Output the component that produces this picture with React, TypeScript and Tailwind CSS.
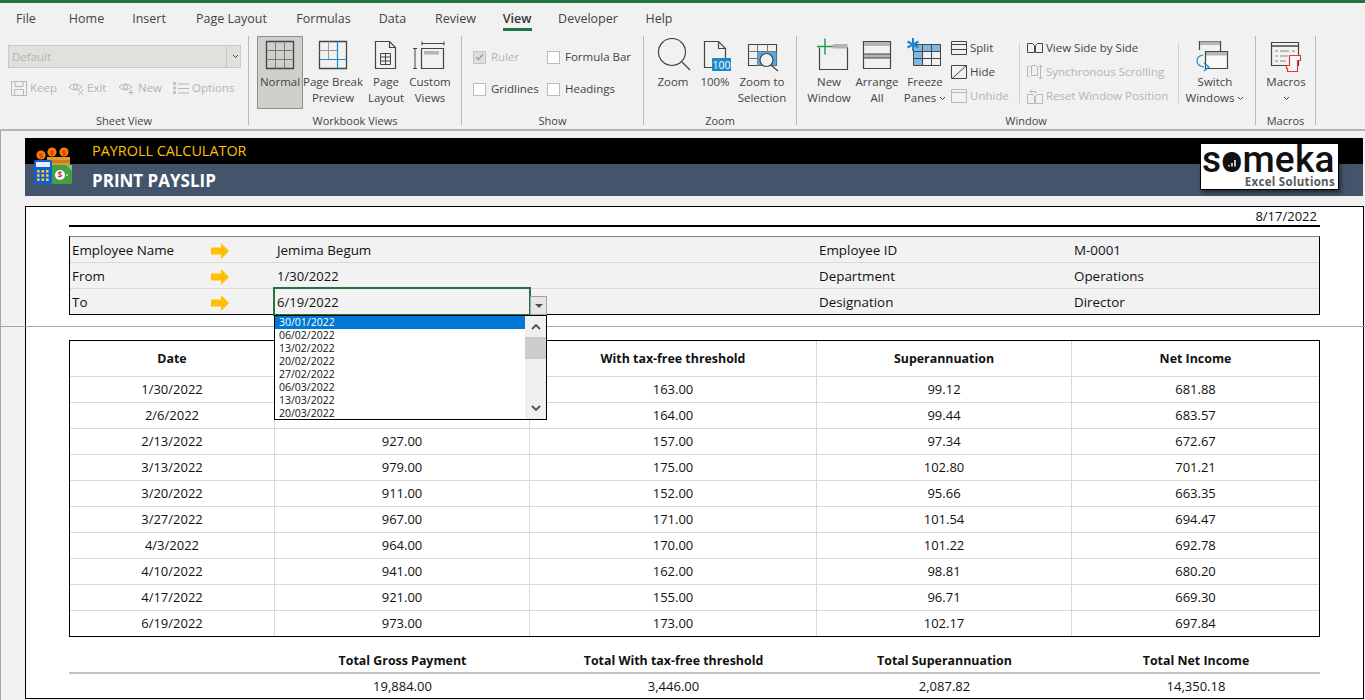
import type { ReactNode } from "react";

const ink = "#444444";
const off = "#b7b7b7";
const blue = "#1e88c9";

const tabs = [
    { label: "File", cls: "w-[52px]" },
    { label: "Home", cls: "w-[69px]" },
    { label: "Insert", cls: "w-[56px]" },
    { label: "Page Layout", cls: "w-[109px]" },
    { label: "Formulas", cls: "w-[75px]" },
    { label: "Data", cls: "w-[63px]" },
    { label: "Review", cls: "w-[63px]" },
    { label: "View", cls: "w-[60px]" },
    { label: "Developer", cls: "w-[82px]" },
    { label: "Help", cls: "w-[60px]" },
];

const payRows = [
    ["1/30/2022", "944.00", "163.00", "99.12", "681.88"],
    ["2/6/2022", "947.00", "164.00", "99.44", "683.57"],
    ["2/13/2022", "927.00", "157.00", "97.34", "672.67"],
    ["3/13/2022", "979.00", "175.00", "102.80", "701.21"],
    ["3/20/2022", "911.00", "152.00", "95.66", "663.35"],
    ["3/27/2022", "967.00", "171.00", "101.54", "694.47"],
    ["4/3/2022", "964.00", "170.00", "101.22", "692.78"],
    ["4/10/2022", "941.00", "162.00", "98.81", "680.20"],
    ["4/17/2022", "921.00", "155.00", "96.71", "669.30"],
    ["6/19/2022", "973.00", "173.00", "102.17", "697.84"],
];

const infoRows = [
    ["Employee Name", "Jemima Begum", "Employee ID", "M-0001"],
    ["From", "1/30/2022", "Department", "Operations"],
    ["To", "6/19/2022", "Designation", "Director"],
];

const listDates = [
    "30/01/2022",
    "06/02/2022",
    "13/02/2022",
    "20/02/2022",
    "27/02/2022",
    "06/03/2022",
    "13/03/2022",
    "20/03/2022",
];

// every big ribbon icon shares a 40x34 box
function BigIcon({ children }: { children: ReactNode }) {
    return (
        <svg width="40" height="34" viewBox="0 0 40 34" fill="none" stroke={ink} strokeWidth="1">
            {children}
        </svg>
    );
}

function BigButton({
    icon,
    lines,
    className,
    caret,
}: {
    icon: ReactNode;
    lines: string[];
    className: string;
    caret?: boolean;
}) {
    return (
        <div className={`flex flex-col items-center h-[73px] pt-[2px] shrink-0 ${className}`}>
            <div className="h-[36px]">{icon}</div>
            {lines.map((l, i) => (
                <div key={i} className={`h-[16px] leading-[16px] whitespace-nowrap ${l === "" ? "-ml-[3px]" : ""}`}>
                    {l}
                    {caret && i === lines.length - 1 && <Caret />}
                </div>
            ))}
        </div>
    );
}

function Caret() {
    return (
        <svg width="7" height="5" viewBox="0 0 7 5" className="inline ml-[3px] mb-[1px]" fill="none" stroke={ink}>
            <path d="M1 1l2.5 2.5L6 1" />
        </svg>
    );
}

function Group({
    label,
    className,
    children,
}: {
    label: string;
    className: string;
    children: ReactNode;
}) {
    return (
        <div className={`relative h-[89px] shrink-0 border-r border-[#b9b9b9] ${className}`}>
            <div className="flex h-[73px]">{children}</div>
            <div className="absolute left-0 right-0 bottom-[-3px] text-center text-[11px] leading-[14px] text-[#444]">
                {label}
            </div>
        </div>
    );
}

function SmallRow({
    icon,
    label,
    disabled,
}: {
    icon: ReactNode;
    label: string;
    disabled?: boolean;
}) {
    return (
        <div className={`flex items-center h-[24px] whitespace-nowrap ${disabled ? "text-[#b4b4b4]" : ""}`}>
            <span className="w-[19px] flex items-center">{icon}</span>
            {label}
        </div>
    );
}

function Check({ label, checked, disabled }: { label: string; checked?: boolean; disabled?: boolean }) {
    return (
        <div className={`flex items-center gap-[5px] h-[32px] ${disabled ? "text-[#b4b4b4]" : ""}`}>
            <span
                className={`w-[13px] h-[13px] border flex items-center justify-center ${
                    checked ? "border-[#c4c4c4] bg-[#dedede]" : "border-[#bcbcbc] bg-white"
                }`}
            >
                {checked && (
                    <svg width="9" height="8" viewBox="0 0 9 8" fill="none" stroke="#9a9a9a" strokeWidth="1.2">
                        <path d="M1 4l2.5 2.5L8 1" />
                    </svg>
                )}
            </span>
            {label}
        </div>
    );
}

function Arrow() {
    return (
        <svg width="18" height="16" viewBox="0 0 18 16" fill="#ffc000">
            <path d="M0 4.500h10V0l8 8-8 8v-4.500H0z" />
        </svg>
    );
}

function Chevron({ up }: { up?: boolean }) {
    return (
        <svg width="10" height="7" viewBox="0 0 10 7" fill="none" stroke="#505050" strokeWidth="1.8">
            <path d={up ? "M1 6l4-4 4 4" : "M1 1l4 4 4-4"} />
        </svg>
    );
}

function Coin({ x, y }: { x: number; y: number }) {
    return (
        <g>
            <circle cx={x} cy={y} r="4.6" fill="#f57c00" />
            <text x={x} y={y + 2.6} fontSize="7.5" fontWeight="700" fill="#d32f2f" textAnchor="middle" fontFamily="Open Sans">
                $
            </text>
        </g>
    );
}

function AppLogo() {
    return (
        <svg width="42" height="42" viewBox="0 0 42 42" className="absolute left-[8px] top-[6px]">
            <rect x="14" y="13" width="23" height="3" fill="#e09a2b" />
            <rect x="14" y="16" width="23" height="3" fill="#c97f1c" />
            <rect x="14" y="19" width="23" height="3" fill="#e09a2b" />
            <Coin x={8} y={11} />
            <Coin x={19} y={8} />
            <Coin x={31} y={8} />
            <rect x="18" y="21" width="21" height="19" fill="#43a047" />
            <path d="M33 21h6v6z" fill="#7cc576" />
            <circle cx="27" cy="31" r="5" fill="#fff" />
            <text x="27" y="34" fontSize="8" fontWeight="700" fill="#d32f2f" textAnchor="middle" fontFamily="Open Sans">
                $
            </text>
            <rect x="33" y="30.500" width="2" height="1" fill="#fff" />
            <rect x="1" y="16" width="18" height="24" rx="2" fill="#0d5fd8" />
            <rect x="3" y="18" width="14" height="5" fill="#e8eef7" />
            {[0, 1, 2].map(c =>
                [0, 1, 2].map(r => (
                    <rect key={`${c}-${r}`} x={4 + c * 4.5} y={26 + r * 4.2} width="2.6" height="2.6" fill="#ffca28" />
                ))
            )}
        </svg>
    );
}

function Ribbon() {
    return (
        <div className="h-[131px] shrink-0 bg-[#f1f1f1] border-b-2 border-[#b4b4b4] text-[#444] font-['Open_Sans',sans-serif] text-[11.5px]">
            <div className="h-[3px] bg-[#217346]" />
            <div className="flex h-[33px] text-[12.5px]">
                {tabs.map(t => (
                    <div key={t.label} className={`relative flex items-center justify-center ${t.cls} ${t.label === "View" ? "font-semibold text-[#333]" : ""}`}>
                        {t.label}
                        {t.label === "View" && (
                            <div className="absolute left-[16px] right-[15px] bottom-[5px] h-[3px] bg-[#217346]" />
                        )}
                    </div>
                ))}
            </div>

            <div className="flex">
                <Group label="Sheet View" className="w-[249px]">
                    <div className="flex flex-col pl-[8px] pt-[9px] text-[#b4b4b4]">
                        <div className="flex items-center w-[233px] h-[23px] bg-[#e1e0dd] border border-[#c9c9c9]">
                            <span className="flex-1 pl-[3px]">Default</span>
                            <span className="w-[14px] h-full border-l border-[#c9c9c9] flex items-center justify-center">
                                <Caret />
                            </span>
                        </div>
                        <div className="flex items-center h-[20px] mt-[10px] pl-[3px]">
                            <svg width="16" height="15" viewBox="0 0 16 15" fill="none" stroke={off} className="mr-[3px]">
                                <path d="M.5.5h15v14H.5zM4 .5v5h8v-5M3.500 14.500v-6h9v6" />
                            </svg>
                            <span className="w-[38px]">Keep</span>
                            <svg width="16" height="15" viewBox="0 0 16 15" fill="none" stroke={off} className="mr-[3px]">
                                <path d="M1 6q6-6 13 0-7 6-13 0z" />
                                <circle cx="7.5" cy="6" r="2" />
                                <path d="M10 9l5 5M15 9l-5 5" />
                            </svg>
                            <span className="w-[31px]">Exit</span>
                            <svg width="17" height="15" viewBox="0 0 17 15" fill="none" stroke={off} className="mr-[3px]">
                                <path d="M1 6q6-6 13 0-7 6-13 0z" />
                                <circle cx="7.5" cy="6" r="2" />
                                <path d="M13 9v5M10.500 11.500h5" />
                            </svg>
                            <span className="w-[35px]">New</span>
                            <svg width="16" height="13" viewBox="0 0 16 13" fill="none" stroke={off} className="mr-[3px]">
                                <path d="M5 2h11M5 6.500h11M5 11h11M.5.5h2v2h-2zM.5 5h2v2h-2zM.5 9.500h2v2h-2z" />
                            </svg>
                            <span>Options</span>
                        </div>
                    </div>
                </Group>

                <Group label="Workbook Views" className="w-[213px]">
                    <div className="w-[8px]" />
                    <BigButton
                        className="w-[46px] bg-[#d1cfcb] border border-[#8f8f8f] !pt-[1px]"
                        lines={["Normal"]}
                        icon={
                            <BigIcon>
                                <path d="M6.500 3.500h27v27h-27z" strokeWidth="1.300" />
                                <path d="M15.500 3.500v27M24.500 3.500v27M6.500 12.500h27M6.500 21.500h27" stroke="#777" />
                            </BigIcon>
                        }
                    />
                    <BigButton
                        className="w-[60px]"
                        lines={["Page Break", "Preview"]}
                        icon={
                            <BigIcon>
                                <path d="M6.500 3.500h27v27h-27z" strokeWidth="1.300" />
                                <path d="M15.500 3.500v18M6.500 12.500h18" stroke="#999" />
                                <path d="M24.500 3.500v27M6.500 21.500h27" stroke={blue} strokeWidth="1.200" />
                            </BigIcon>
                        }
                    />
                    <BigButton
                        className="w-[46px]"
                        lines={["Page", "Layout"]}
                        icon={
                            <BigIcon>
                                <path d="M9.500 3.500h14l6 6v21h-20zM23.500 3.500v6h6" strokeWidth="1.200" />
                                <path d="M14.500 15.500h10v11h-10zM14.500 19h10M14.500 23h10M19.500 15.500v11" />
                            </BigIcon>
                        }
                    />
                    <BigButton
                        className="w-[42px]"
                        lines={["Custom", "Views"]}
                        icon={
                            <BigIcon>
                                <path d="M12 5.500h22M12 3.500v4M34 3.500v4M5 10.500v20M3 10.500h4M3 30.500h4" />
                                <path d="M11.500 10.500h22v20h-22z" strokeWidth="1.200" />
                                <rect x="14" y="13" width="15" height="3.500" fill="#b5b5b5" stroke="none" />
                            </BigIcon>
                        }
                    />
                </Group>

                <Group label="Show" className="w-[182px]">
                    <div className="flex pl-[11px] pt-[5px]">
                        <div className="w-[74px]">
                            <Check label="Ruler" checked disabled />
                            <Check label="Gridlines" />
                        </div>
                        <div>
                            <Check label="Formula Bar" />
                            <Check label="Headings" />
                        </div>
                    </div>
                </Group>

                <Group label="Zoom" className="w-[153px]">
                    <div className="w-[6px]" />
                    <BigButton
                        className="w-[46px]"
                        lines={["Zoom"]}
                        icon={
                            <BigIcon>
                                <circle cx="19" cy="14" r="13.500" strokeWidth="1.200" />
                                <path d="M29 24l8 8" strokeWidth="1.200" />
                            </BigIcon>
                        }
                    />
                    <BigButton
                        className="w-[38px]"
                        lines={["100%"]}
                        icon={
                            <BigIcon>
                                <path d="M9.500 3.500h14l7 7v19h-21zM23.500 3.500v7h7" strokeWidth="1.200" />
                                <rect x="17" y="20" width="19" height="13" fill={blue} stroke="none" />
                                <text x="26.500" y="31" fill="#fff" stroke="none" fontSize="10.5" textAnchor="middle" fontFamily="Open Sans">
                                    100
                                </text>
                            </BigIcon>
                        }
                    />
                    <BigButton
                        className="w-[56px]"
                        lines={["Zoom to", "Selection"]}
                        icon={
                            <BigIcon>
                                <path d="M6.500 6.500h28v21h-28z" strokeWidth="1.100" />
                                <path d="M6.500 13.500h28M6.500 20.500h9M15.500 6.500v21M25.500 6.500v7" stroke="#777" />
                                <rect x="15.500" y="14" width="19" height="13.500" fill="#5aa7dd" stroke="none" />
                                <circle cx="24.500" cy="22" r="6.500" fill="#f1f1f1" strokeWidth="1.200" />
                                <path d="M29 27l7 6" strokeWidth="1.200" />
                            </BigIcon>
                        }
                    />
                </Group>

                <Group label="Window" className="w-[459px]">
                    <div className="w-[8px]" />
                    <BigButton
                        className="w-[48px]"
                        lines={["New", "Window"]}
                        icon={
                            <BigIcon>
                                <path d="M10.500 9.500v22h28v-22h-14" strokeWidth="1.200" />
                                <rect x="24" y="6" width="14.500" height="4.500" fill="#b5b5b5" stroke="none" />
                                <path d="M16 .5v16M8 8.500h16" stroke="#22a14a" strokeWidth="1.500" />
                            </BigIcon>
                        }
                    />
                    <BigButton
                        className="w-[48px]"
                        lines={["Arrange", "All"]}
                        icon={
                            <BigIcon>
                                <path d="M6.500 3.500h27v27h-27z" strokeWidth="1.200" />
                                <rect x="7" y="4" width="26" height="4" fill="#b5b5b5" stroke="none" />
                                <rect x="7" y="16" width="26" height="4" fill="#b5b5b5" stroke="none" />
                                <path d="M6.500 16h27M6.500 20h27" />
                            </BigIcon>
                        }
                    />
                    <BigButton
                        className="w-[48px]"
                        lines={["Freeze", "Panes"]}
                        caret
                        icon={
                            <BigIcon>
                                <rect x="8" y="6" width="28" height="7" fill="#7fb8e6" stroke="none" />
                                <rect x="8" y="13" width="9" height="14" fill="#7fb8e6" stroke="none" />
                                <path d="M8.500 6.500h27v21h-27zM8.500 13.500h27M8.500 20.500h27M17.500 6.500v21M26.500 6.500v21" />
                                <path d="M8 0v13M2.500 3.500l11 6M13.500 3.500l-11 6" stroke={blue} strokeWidth="2" />
                            </BigIcon>
                        }
                    />
                    <div className="w-[2px]" />
                    <div className="w-[68px]">
                        <SmallRow
                            label="Split"
                            icon={
                                <svg width="16" height="14" viewBox="0 0 16 14" fill="none" stroke={ink}>
                                    <path d="M.5.5h15v13H.5zM.5 3.500h15M.5 8.500h15" />
                                </svg>
                            }
                        />
                        <SmallRow
                            label="Hide"
                            icon={
                                <svg width="16" height="14" viewBox="0 0 16 14" fill="none" stroke={ink}>
                                    <path d="M.5.5h15v13H.5zM1 13.500L15.500.5" />
                                </svg>
                            }
                        />
                        <SmallRow
                            label="Unhide"
                            disabled
                            icon={
                                <svg width="16" height="14" viewBox="0 0 16 14" fill="none" stroke={off}>
                                    <path d="M.5.5h15v13H.5zM.5 3.500h15" />
                                </svg>
                            }
                        />
                    </div>
                    <div className="w-px h-[60px] mt-[7px] bg-[#cfcfcf]" />
                    <div className="w-[158px] pl-[7px]">
                        <SmallRow
                            label="View Side by Side"
                            icon={
                                <svg width="16" height="10" viewBox="0 0 16 10" fill="none" stroke={ink}>
                                    <path d="M.5.5h5l2 2v7h-7zM8.500 2.500l2-2h5v9h-7z" />
                                </svg>
                            }
                        />
                        <SmallRow
                            label="Synchronous Scrolling"
                            disabled
                            icon={
                                <svg width="17" height="16" viewBox="0 0 17 16" fill="none" stroke={off}>
                                    <path d="M2.500 2.500H.5v10h2M4.500 1.500h4l2 2v8h-6zM13.500 1v14M11.500 3l2-2 2 2M11.500 13l2 2 2-2" />
                                </svg>
                            }
                        />
                        <SmallRow
                            label="Reset Window Position"
                            disabled
                            icon={
                                <svg width="16" height="16" viewBox="0 0 16 16" fill="none" stroke={off}>
                                    <path d="M.5 6.500h5l2 2v7h-7zM8.500 8.500l2-2h5v9h-7zM3 3.500h6v2M5 1.500l-2 2 2 2" />
                                </svg>
                            }
                        />
                    </div>
                    <div className="w-px h-[60px] mt-[7px] bg-[#cfcfcf]" />
                    <BigButton
                        className="w-[72px]"
                        lines={["Switch", "Windows"]}
                        caret
                        icon={
                            <BigIcon>
                                <path d="M4.500 12V3.500h21V13" strokeWidth="1.200" />
                                <rect x="5" y="3.500" width="20" height="3.500" fill="#b5b5b5" stroke="none" />
                                <path d="M10.500 13.500h22v17h-22z" fill="#f8f8f8" strokeWidth="1.200" />
                                <rect x="11" y="14" width="21" height="3.500" fill="#b5b5b5" stroke="none" />
                                <path d="M8 17q-6 1-6 6t7 6M9 25l5 4-5 4" stroke={blue} strokeWidth="1.200" />
                            </BigIcon>
                        }
                    />
                </Group>

                <Group label="Macros" className="w-[60px]">
                    <BigButton
                        className="w-[60px]"
                        lines={["Macros", ""]}
                        caret
                        icon={
                            <BigIcon>
                                <path d="M5.500 4.500h27v23h-27z" strokeWidth="1.200" />
                                <path d="M5.500 8h27" strokeWidth="1.500" />
                                <path d="M9 13h3M14 13h9M26 13h3M9 18h3M14 18h8M9 23h3M14 23h6" stroke="#888" />
                                <path d="M23.500 17.500h11v5h-3v11h-10v-3h-1v-3h3v-10z" fill="#f8f8f8" stroke="#e83a3a" strokeWidth="1.200" />
                            </BigIcon>
                        }
                    />
                </Group>
            </div>
        </div>
    );
}

function Banner() {
    return (
        <div className="relative ml-[24px] w-[1338px] h-[58px] shrink-0 font-['Open_Sans',sans-serif]">
            <div className="h-[26px] bg-black pl-[67px] flex items-center text-[14.4px] text-[#ffc000]">
                PAYROLL CALCULATOR
            </div>
            <div className="h-[32px] bg-[#44546a] pl-[67px] pt-[2px] flex items-center text-[17px] font-bold text-white">
                PRINT PAYSLIP
            </div>
            <AppLogo />
            <div className="absolute left-[1175px] top-[5px] w-[139px] h-[47px] bg-white border border-black shadow-[2px_3px_4px_rgba(0,0,0,0.45)]">
                <div className="relative pl-[1px] text-[37px] leading-[31px] font-medium tracking-[0.2px] font-['Roboto',sans-serif] text-[#111]">
                    someka
                    <svg width="16" height="16" viewBox="0 0 16 16" className="absolute left-[23px] top-[11px]">
                        <circle cx="8" cy="8" r="8" fill="#111" />
                        <path d="M5 10v1.500M8 8v3.500M11 5v6.500" stroke="#fff" strokeWidth="1.500" />
                    </svg>
                </div>
                <div className="text-right pr-[3px] text-[11.5px] leading-[14px] font-bold tracking-[0.3px] text-[#595959] font-['Open_Sans',sans-serif]">
                    Excel Solutions
                </div>
            </div>
        </div>
    );
}

function Sheet() {
    return (
        <div className="flex-1 bg-[#f1f1f1] border-l border-[#a6a6a6] pt-[7px] font-['Open_Sans',sans-serif] text-[13px] text-[#111]">
            <Banner />
            <div className="ml-[24px] mt-[10px] w-[1339px] h-[493px] bg-white border border-black pl-[43px]">
                <div className="w-[1251px] h-[20px] border-b-2 border-black text-right pr-[3px] leading-[19px]">8/17/2022</div>
                <div className="w-[1251px] mt-[9px] bg-[#f2f2f2] border border-black border-t-[#808080]">
                    {infoRows.map((r, i) => (
                        <div
                            key={r[0]}
                            className={`grid grid-cols-[139px_66px_542px_255px_1fr] items-center pl-[2px] text-[13.4px] ${
                                i < 2 ? "h-[26px] pt-[2px] border-b border-[#d9d9d9]" : "h-[25px] pt-[2px]"
                            }`}
                        >
                            <span>{r[0]}</span>
                            <Arrow />
                            <span className={i > 0 ? "text-[13px]" : ""}>{r[1]}</span>
                            <span>{r[2]}</span>
                            <span>{r[3]}</span>
                        </div>
                    ))}
                </div>

                <div className="w-[1251px] mt-[25px] border border-black">
                    <div className="grid grid-cols-[205px_255px_287px_255px_247px] h-[36px] items-center text-center font-bold text-[12.4px] border-b border-[#d9d9d9]">
                        {["Date", "Gross Payment", "With tax-free threshold", "Superannuation", "Net Income"].map((h, i) => (
                            <div key={h} className={`h-full pt-[2px] flex items-center justify-center ${i < 4 ? "border-r border-[#d9d9d9]" : ""}`}>
                                {h}
                            </div>
                        ))}
                    </div>
                    {payRows.map((row, ri) => (
                        <div
                            key={row[0]}
                            className={`grid grid-cols-[205px_255px_287px_255px_247px] text-center ${
                                ri < payRows.length - 1 ? "h-[26px] border-b border-[#d9d9d9]" : "h-[25px]"
                            }`}
                        >
                            {row.map((v, i) => (
                                <div key={i} className={`flex items-center justify-center ${i < 4 ? "border-r border-[#d9d9d9]" : ""}`}>
                                    {v}
                                </div>
                            ))}
                        </div>
                    ))}
                </div>

                <div className="w-[1251px] mt-[14px] grid grid-cols-[206px_255px_287px_255px_248px] text-center">
                    <div className="col-span-5 grid grid-cols-subgrid h-[23px] items-center font-bold text-[12.4px] border-b-2 border-[#c4c4c4]">
                        <span />
                        <span>Total Gross Payment</span>
                        <span>Total With tax-free threshold</span>
                        <span>Total Superannuation</span>
                        <span>Total Net Income</span>
                    </div>
                    <div className="col-span-5 grid grid-cols-subgrid h-[26px] items-center">
                        <span />
                        <span>19,884.00</span>
                        <span>3,446.00</span>
                        <span>2,087.82</span>
                        <span>14,350.18</span>
                    </div>
                </div>
            </div>
        </div>
    );
}

export default function App() {
    return (
        <div className="relative w-[1365px] h-[700px] overflow-hidden flex flex-col bg-[#f1f1f1]">
            <Ribbon />
            <Sheet />

            {/* freeze pane line */}
            <div className="absolute left-0 right-0 top-[326px] h-px bg-[#a6a6a6]" />

            {/* selected cell */}
            <div className="absolute left-[273px] top-[287px] w-[258px] h-[29px] border-2 border-[#217346]" />

            {/* validation dropdown button */}
            <div className="absolute left-[530px] top-[296px] w-[17px] h-[19px] bg-[#e6e6e6] border border-[#a0a0aa] flex items-center justify-center">
                <svg width="8" height="4" viewBox="0 0 8 4" fill="#505050">
                    <path d="M0 0h8L4 4z" />
                </svg>
            </div>

            {/* validation list */}
            <div className="absolute left-[274px] top-[315px] w-[273px] h-[105px] bg-white border border-black flex font-['Open_Sans',sans-serif] text-[10.5px] text-[#111]">
                <div className="flex-1">
                    {listDates.map((d, i) => (
                        <div key={d} className={`h-[13px] leading-[13px] pl-[4px] ${i === 0 ? "bg-[#0078d7] text-white" : ""}`}>
                            {d}
                        </div>
                    ))}
                </div>
                <div className="w-[21px] bg-[#f0f0f0] flex flex-col items-center">
                    <div className="h-[21px] flex items-center justify-center">
                        <Chevron up />
                    </div>
                    <div className="w-full h-[22px] bg-[#cdcdcd]" />
                    <div className="flex-1" />
                    <div className="h-[21px] flex items-center justify-center">
                        <Chevron />
                    </div>
                </div>
            </div>
        </div>
    );
}
